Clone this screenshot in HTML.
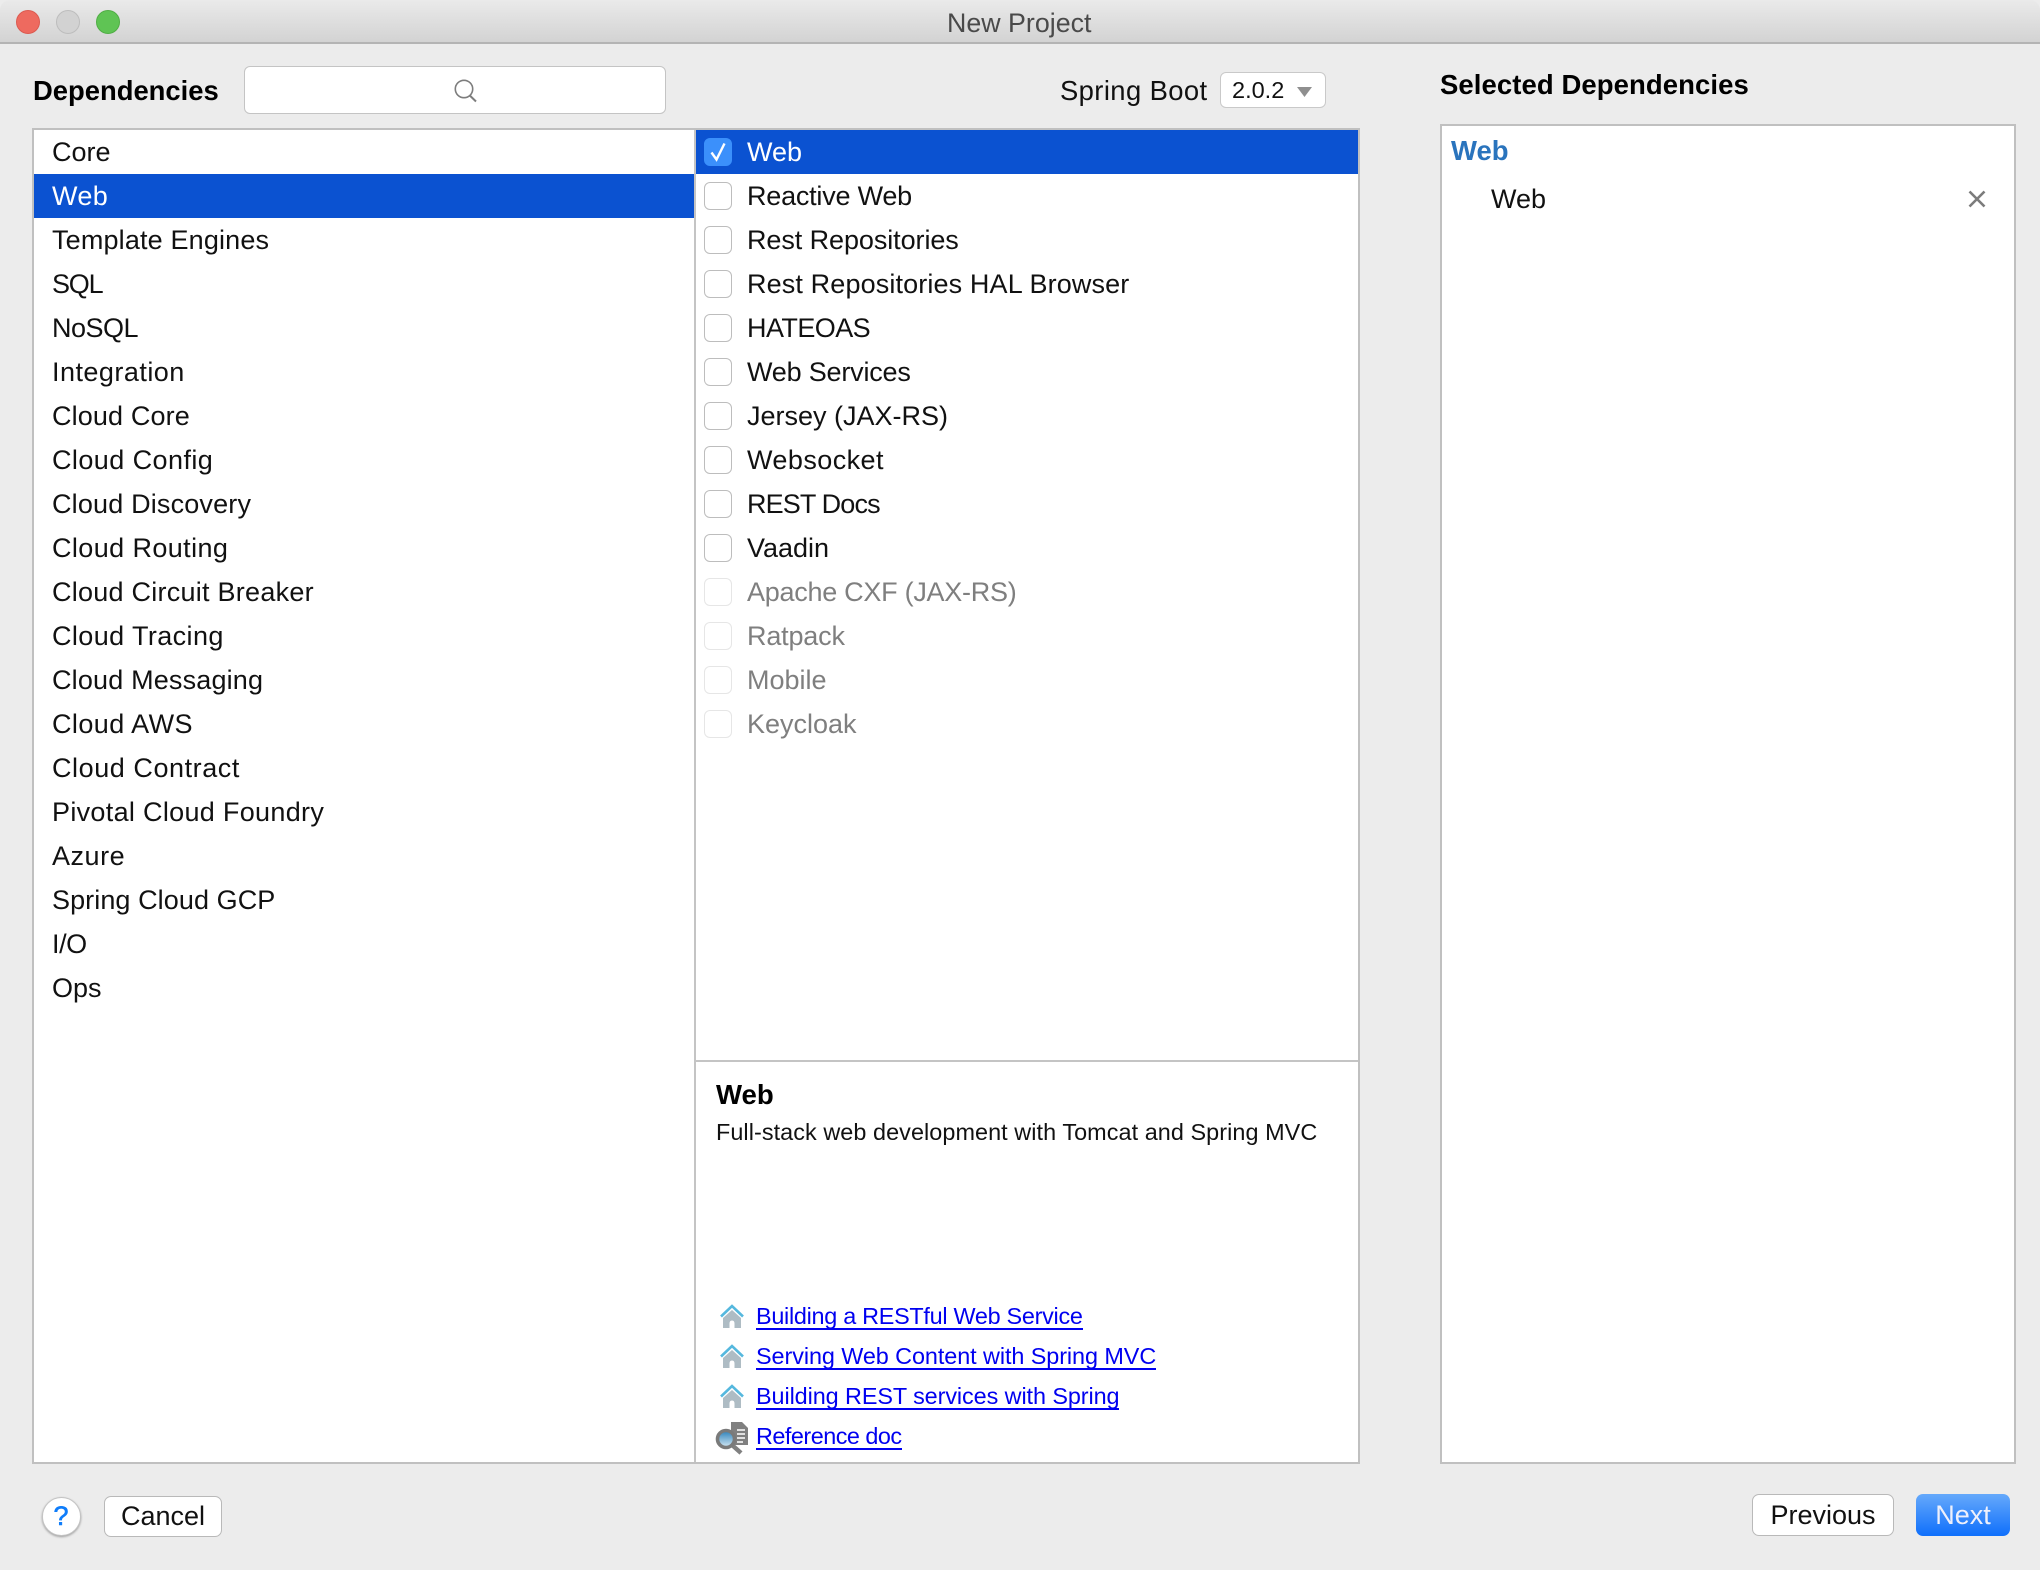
<!DOCTYPE html>
<html><head><meta charset="utf-8"><title>New Project</title>
<style>
html,body{margin:0;padding:0;width:2040px;height:1570px;overflow:hidden;background:#ececec}
body{position:relative;font-family:"Liberation Sans",sans-serif;color:#111;font-size:27px}
.a{position:absolute;white-space:nowrap}
.tb{left:0;top:0;width:2040px;height:42px;background:linear-gradient(#eaeaea,#d3d3d3);border-bottom:2px solid #b4b4b4;border-top-left-radius:10px;border-top-right-radius:10px}
.dot{width:24px;height:24px;border-radius:50%;top:10px;box-sizing:border-box}
.panel{background:#fff;border:2px solid #c0c0c0;box-sizing:border-box}
.r{left:52px;height:44px;line-height:45px}
.sel{background:#0b52d1}
.m{left:747px;height:44px;line-height:45px}
.cb{left:704px;width:28px;height:28px;box-sizing:border-box;background:#fff;border:1.5px solid #bdbdbd;border-radius:6px}
.d{color:#7f7f7f}
.cb.dd{border-color:#e6e6e6}
.btn{background:#fff;border:1.5px solid #b9b9b9;border-radius:7px;box-sizing:border-box;text-align:center}
a{color:#0000f0;text-decoration:none;border-bottom:2px solid #0000f0;font-size:23.4px;line-height:28px;height:26px;display:block}
</style></head><body>
<div class="a tb"></div>
<div class="a dot" style="left:16px;background:#ee6a5f;border:1px solid #dc5a50"></div>
<div class="a dot" style="left:56px;background:#d2d2d2;border:1px solid #bdbdbd"></div>
<div class="a dot" style="left:96px;background:#5fc454;border:1px solid #50ae45"></div>
<div class="a" style="left:947px;top:6px;font-size:26.8px;line-height:34px;color:#4a4a4a">New Project</div>

<div class="a" style="left:33px;top:74px;font-size:27.4px;line-height:34px;font-weight:bold;color:#000">Dependencies</div>
<div class="a" style="left:244px;top:66px;width:422px;height:48px;background:#fff;border:1.5px solid #c4c4c4;border-radius:6px;box-sizing:border-box"></div>
<svg class="a" style="left:452px;top:77px" width="26" height="26" viewBox="0 0 26 26"><circle cx="12" cy="12" r="8.7" fill="none" stroke="#7d7d7d" stroke-width="1.6"/><path d="M17.8 18.5L24 24.5" stroke="#7d7d7d" stroke-width="2" fill="none"/></svg>
<div class="a" style="left:1060px;top:73px;line-height:36px;font-size:27.4px;letter-spacing:.4px;color:#111">Spring Boot</div>
<div class="a" style="left:1220px;top:72px;width:106px;height:36px;background:#fff;border:1.5px solid #c9c9c9;border-radius:6px;box-sizing:border-box"></div>
<div class="a" style="left:1232px;top:72px;line-height:36px;font-size:23.5px">2.0.2</div>
<svg class="a" style="left:1297px;top:86px" width="16" height="12"><path d="M0 1H15L7.5 11Z" fill="#8f8f8f"/></svg>

<div class="a panel" style="left:32px;top:128px;width:1328px;height:1336px"></div>
<div class="a" style="left:694px;top:130px;width:2px;height:1332px;background:#c4c4c4"></div>
<div class="a" style="left:696px;top:1060px;width:662px;height:2px;background:#c4c4c4"></div>
<div class="a sel" style="left:34px;top:174px;width:660px;height:44px"></div>
<div class="a sel" style="left:696px;top:130px;width:662px;height:44px"></div>

<div class="a r" style="top:130px">Core</div>
<div class="a r" style="top:174px;color:#fff;letter-spacing:.4px">Web</div>
<div class="a r" style="top:218px;letter-spacing:.16px">Template Engines</div>
<div class="a r" style="top:262px;letter-spacing:-1.2px">SQL</div>
<div class="a r" style="top:306px;letter-spacing:-.5px">NoSQL</div>
<div class="a r" style="top:350px;letter-spacing:.47px">Integration</div>
<div class="a r" style="top:394px;letter-spacing:.13px">Cloud Core</div>
<div class="a r" style="top:438px;letter-spacing:.43px">Cloud Config</div>
<div class="a r" style="top:482px;letter-spacing:.17px">Cloud Discovery</div>
<div class="a r" style="top:526px;letter-spacing:.4px">Cloud Routing</div>
<div class="a r" style="top:570px;letter-spacing:.25px">Cloud Circuit Breaker</div>
<div class="a r" style="top:614px;letter-spacing:.4px">Cloud Tracing</div>
<div class="a r" style="top:658px;letter-spacing:.17px">Cloud Messaging</div>
<div class="a r" style="top:702px;letter-spacing:.43px">Cloud AWS</div>
<div class="a r" style="top:746px;letter-spacing:.56px">Cloud Contract</div>
<div class="a r" style="top:790px;letter-spacing:.31px">Pivotal Cloud Foundry</div>
<div class="a r" style="top:834px;letter-spacing:.52px">Azure</div>
<div class="a r" style="top:878px;letter-spacing:.08px">Spring Cloud GCP</div>
<div class="a r" style="top:922px;letter-spacing:-.43px">I/O</div>
<div class="a r" style="top:966px">Ops</div>

<div class="a cb" style="top:138px;background:#3b90fb;border-color:#3b90fb"></div>
<svg class="a" style="left:704px;top:138px" width="28" height="28"><path d="M7.5 14.5L12.5 21.5L20.5 5.5" fill="none" stroke="#fff" stroke-width="2.4"/></svg>
<div class="a m" style="top:130px;color:#fff">Web</div>
<div class="a cb" style="top:182px"></div><div class="a m" style="top:174px;letter-spacing:-.22px">Reactive Web</div>
<div class="a cb" style="top:226px"></div><div class="a m" style="top:218px;letter-spacing:-.08px">Rest Repositories</div>
<div class="a cb" style="top:270px"></div><div class="a m" style="top:262px;letter-spacing:.13px">Rest Repositories HAL Browser</div>
<div class="a cb" style="top:314px"></div><div class="a m" style="top:306px;letter-spacing:-.56px">HATEOAS</div>
<div class="a cb" style="top:358px"></div><div class="a m" style="top:350px;letter-spacing:-.2px">Web Services</div>
<div class="a cb" style="top:402px"></div><div class="a m" style="top:394px">Jersey (JAX-RS)</div>
<div class="a cb" style="top:446px"></div><div class="a m" style="top:438px;letter-spacing:.43px">Websocket</div>
<div class="a cb" style="top:490px"></div><div class="a m" style="top:482px;letter-spacing:-.87px">REST Docs</div>
<div class="a cb" style="top:534px"></div><div class="a m" style="top:526px">Vaadin</div>
<div class="a cb dd" style="top:578px"></div><div class="a m d" style="top:570px;letter-spacing:-.27px">Apache CXF (JAX-RS)</div>
<div class="a cb dd" style="top:622px"></div><div class="a m d" style="top:614px;letter-spacing:-.18px">Ratpack</div>
<div class="a cb dd" style="top:666px"></div><div class="a m d" style="top:658px">Mobile</div>
<div class="a cb dd" style="top:710px"></div><div class="a m d" style="top:702px">Keycloak</div>

<div class="a" style="left:716px;top:1078px;font-size:27.6px;line-height:34px;font-weight:bold;color:#000">Web</div>
<div class="a" style="left:716px;top:1118px;font-size:23.4px;line-height:28px;letter-spacing:.07px">Full-stack web development with Tomcat and Spring MVC</div>

<svg width="0" height="0" style="position:absolute"><defs>
<symbol id="h" viewBox="0 0 24 24"><path d="M3 14V24H9.5V19.5Q9.5 16.5 12 16.5Q14.5 16.5 14.5 19.5V24H21V14L12 6Z" fill="#aebcc4"/><path d="M1 12.5L12 2L23 12.5" fill="none" stroke="#55b8de" stroke-width="2.6"/></symbol>
</defs></svg>
<svg class="a" style="left:720px;top:1304px" width="24" height="24"><use href="#h"/></svg>
<svg class="a" style="left:720px;top:1344px" width="24" height="24"><use href="#h"/></svg>
<svg class="a" style="left:720px;top:1384px" width="24" height="24"><use href="#h"/></svg>
<svg class="a" style="left:714px;top:1420px" width="36" height="36" viewBox="0 0 36 36"><defs><linearGradient id="g" x1="0" y1="0" x2="0" y2="1"><stop offset="0" stop-color="#2a7fb8"/><stop offset="1" stop-color="#d6eaf5"/></linearGradient></defs><path d="M17 2H28L34 8V25H17Z" fill="#808080"/><path d="M23 10H31M23 14H31M23 18H31M23 22H29" stroke="#fff" stroke-width="1.5"/><path d="M18 25L27 33" stroke="#808080" stroke-width="4.5"/><circle cx="12" cy="19" r="8.5" fill="url(#g)" stroke="#7a7a7a" stroke-width="3.6"/></svg>
<a class="a" style="left:756px;top:1302px;letter-spacing:-.28px">Building a RESTful Web Service</a>
<a class="a" style="left:756px;top:1342px;letter-spacing:-.07px">Serving Web Content with Spring MVC</a>
<a class="a" style="left:756px;top:1382px;letter-spacing:-.08px">Building REST services with Spring</a>
<a class="a" style="left:756px;top:1422px;letter-spacing:-.5px">Reference doc</a>

<div class="a" style="left:1440px;top:68px;font-size:27.5px;line-height:34px;font-weight:bold;letter-spacing:.08px;color:#000">Selected Dependencies</div>
<div class="a panel" style="left:1440px;top:124px;width:576px;height:1340px"></div>
<div class="a" style="left:1451px;top:134px;font-size:27.5px;line-height:34px;font-weight:bold;color:#2a74bd">Web</div>
<div class="a" style="left:1491px;top:182px;line-height:34px">Web</div>
<svg class="a" style="left:1968px;top:190px" width="18" height="18"><path d="M1.5 1.5L16.5 16.5M16.5 1.5L1.5 16.5" stroke="#7c7c7c" stroke-width="2.6"/></svg>

<div class="a" style="left:42px;top:1497px;width:39px;height:39px;border-radius:50%;background:#fff;border:1px solid #c4c4c4;box-sizing:border-box;box-shadow:0 1px 2px rgba(0,0,0,.35);text-align:center;line-height:37px;font-size:27px;color:#0f7dfa;-webkit-text-stroke:.6px #0f7dfa;text-indent:-1px">?</div>
<div class="a btn" style="left:104px;top:1496px;width:118px;height:41px;line-height:39px">Cancel</div>
<div class="a btn" style="left:1752px;top:1494px;width:142px;height:42px;line-height:40px">Previous</div>
<div class="a" style="left:1916px;top:1494px;width:94px;height:42px;line-height:42px;border-radius:7px;text-align:center;color:#eef0fb;background:linear-gradient(#65a9fb,#0f6ffb)">Next</div>
</body></html>
